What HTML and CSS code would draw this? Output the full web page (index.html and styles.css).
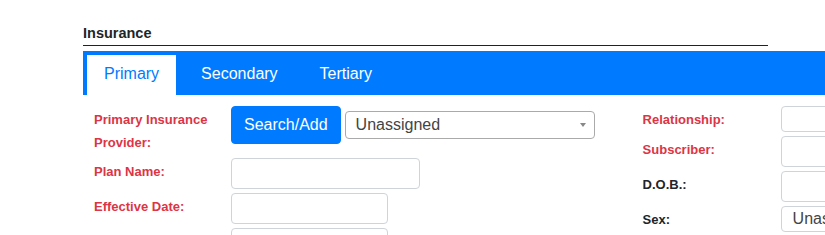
FILE: index.html
```html
<!DOCTYPE html>
<html lang="en">
<head>
  <meta charset="UTF-8" />
  <title>Insurance</title>
  <link rel="stylesheet" href="styles.css">
</head>
<body>
  <div class="page">
    <h3 class="section-title">Insurance</h3>

    <!-- tabs -->
    <div class="tab-bar">
      <div class="tab active">Primary</div>
      <div class="tab">Secondary</div>
      <div class="tab">Tertiary</div>
    </div>

    <div class="form">
      <!-- left side -->
      <div class="col col-left">
        <label class="lbl req">Primary Insurance Provider:</label>
        <div class="ctrl provider">
          <button class="btn">Search/Add</button>
          <div class="select wide">
            <span class="select-text">Unassigned</span>
            <b class="arrow"></b>
          </div>
        </div>

        <label class="lbl req">Plan Name:</label>
        <div class="ctrl"><input type="text" class="field plan"></div>

        <label class="lbl req">Effective Date:</label>
        <div class="ctrl"><input type="text" class="field date"></div>

        <label class="lbl"></label>
        <div class="ctrl"><input type="text" class="field date"></div>
      </div>

      <!-- right side -->
      <div class="col col-right">
        <label class="lbl req">Relationship:</label>
        <div class="ctrl"><input type="text" class="field short"></div>

        <label class="lbl req">Subscriber:</label>
        <div class="ctrl"><input type="text" class="field"></div>

        <label class="lbl">D.O.B.:</label>
        <div class="ctrl"><input type="text" class="field"></div>

        <label class="lbl">Sex:</label>
        <div class="ctrl">
          <div class="select narrow">
            <span class="select-text">Unassigned</span>
            <b class="arrow"></b>
          </div>
        </div>
      </div>
    </div>
  </div>
</body>
</html>
```

FILE: styles.css
```css
* {
  box-sizing: border-box;
}
html, body {
  overflow: hidden;
}
body {
  margin: 0;
  font-family: 'Liberation Sans', Arial, sans-serif;
  color: #212529;
  background: #fff;
}
.page {
  width: 825px;
  padding-left: 83px;
}
.section-title {
  width: 685px;
  margin: 23px 0 5px;
  padding-bottom: 2px;
  font-size: 14.5px;
  line-height: 20px;
  font-weight: bold;
  border-bottom: 1px solid #222;
}
.tab-bar {
  display: flex;
  gap: 8px;
  height: 44px;
  padding: 4px 0 0 4px;
  background: #007bff;
}
.tab {
  height: 40px;
  padding: 0 17px;
  font-size: 16px;
  line-height: 38px;
  color: #fff;
}
.tab.active {
  background: #fff;
  color: #007bff;
}
.form {
  display: flex;
  align-items: flex-start;
  padding: 11px 0 0 11px;
}
.col {
  display: grid;
  row-gap: 4px;
  align-items: start;
  align-content: start;
}
.col-left {
  width: 501px;
  grid-template-columns: 137px auto;
}
.col-right {
  margin-left: 48px;
  grid-template-columns: 138px 160px;
}
.lbl {
  margin-top: 2px;
  font-size: 13px;
  line-height: 23px;
  font-weight: bold;
  color: #212529;
}
.col-right .lbl {
  margin-top: 1.5px;
}
.lbl.req {
  color: #dc3545;
}
.ctrl {
  display: flex;
  align-items: center;
  gap: 4px;
}
.btn {
  height: 38px;
  padding: 0 12px;
  border: 1px solid #007bff;
  border-radius: 4px;
  background: #007bff;
  color: #fff;
  font-family: inherit;
  font-size: 16px;
}
.field {
  width: 160px;
  height: 31px;
  border: 1px solid #ced4da;
  border-radius: 4px;
  background: #fff;
}
.field.plan {
  width: 189px;
}
.field.date {
  width: 157px;
}
.field.short {
  height: 26px;
}
.select {
  display: flex;
  align-items: center;
  border: 1px solid #aaa;
  border-radius: 4px;
  background: #fff;
  font-size: 16px;
  color: #444;
}
.select.wide {
  width: 250px;
  height: 28px;
  padding: 0 8px 0 10px;
}
.select.narrow {
  width: 160px;
  height: 26px;
  padding: 0 8px 0 11px;
  border-color: #ced4da;
}
.select-text {
  flex: 1;
}
.arrow {
  width: 0;
  height: 0;
  border-style: solid;
  border-width: 4px 3.5px 0;
  border-color: #888 transparent transparent;
}
```
